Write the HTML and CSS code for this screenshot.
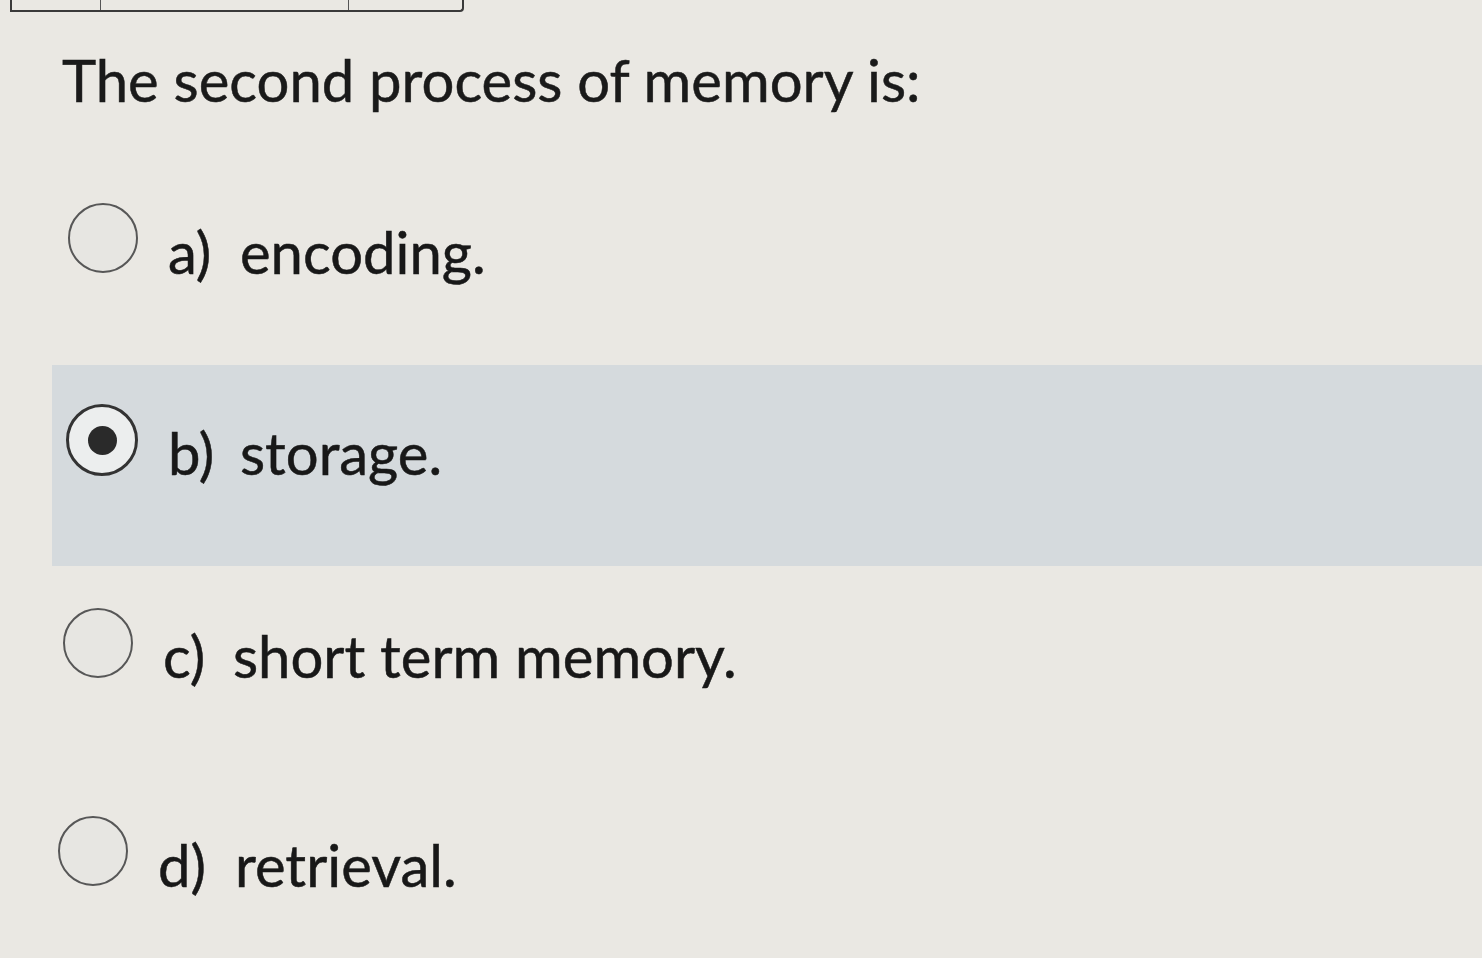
FILE: index.html
```html
<!DOCTYPE html>
<html lang="en">
<head>
<meta charset="utf-8">
<title>Quiz question</title>
<link rel="stylesheet" href="styles.css">
</head>
<body>
<div class="topbox">
  <div class="cell c1"></div>
  <div class="cell c2"></div>
  <div class="cell c3"></div>
</div>
<h1 class="question">The second process of memory is:</h1>
<div class="options">
  <label class="option opt-a">
    <span class="radio"></span>
    <span class="label"><span class="letter">a)</span><span class="text">encoding.</span></span>
  </label>
  <label class="option opt-b selected">
    <span class="radio"><span class="dot"></span></span>
    <span class="label"><span class="letter">b)</span><span class="text">storage.</span></span>
  </label>
  <label class="option opt-c">
    <span class="radio"></span>
    <span class="label"><span class="letter">c)</span><span class="text">short term memory.</span></span>
  </label>
  <label class="option opt-d">
    <span class="radio"></span>
    <span class="label"><span class="letter">d)</span><span class="text">retrieval.</span></span>
  </label>
</div>
</body>
</html>
```
FILE: styles.css
```css
html, body {
  margin: 0;
  padding: 0;
}
body {
  background: #eae8e3;
  font-family: Lato, "Open Sans", sans-serif;
  color: #181818;
  width: 1482px;
  height: 958px;
  overflow: hidden;
}
.topbox {
  display: flex;
  margin-left: 10px;
  width: 450px;
  height: 10px;
  border: 2px solid #3a3a3a;
  border-top: none;
  border-bottom-right-radius: 4px;
}
.cell {
  height: 100%;
}
.c1 { width: 88px; border-right: 1px solid #555; }
.c2 { width: 247px; border-right: 1px solid #555; }
.c3 { flex: 1; }
.question {
  margin: 32px 0 0 62px;
  font-size: 58px;
  line-height: 72px;
  font-weight: 400;
  color: #1a1a1a;
  -webkit-text-stroke: 0.5px #1a1a1a;
}
.options {
  margin-top: 48px;
  padding-left: 52px;
  display: flex;
  flex-direction: column;
}
.option {
  display: flex;
  align-items: flex-start;
  box-sizing: border-box;
  height: 201px;
  padding-top: 39px;
  padding-left: 16px;
}
.opt-b { padding-left: 14px; }
.opt-c { height: 206px; padding-top: 42px; padding-left: 11px; }
.opt-d { height: 206px; padding-top: 44px; padding-left: 6px; }
.option.selected {
  background: #d5dadd;
}
.radio {
  width: 66px;
  height: 66px;
  border: 2.5px solid #575757;
  border-radius: 50%;
  flex: none;
  display: flex;
  align-items: center;
  justify-content: center;
  background: #e7e6e2;
}
.selected .radio {
  border: 3px solid #333;
  background: #eceeee;
}
.dot {
  width: 29px;
  height: 29px;
  border-radius: 50%;
  background: #2a2a2a;
}
.label {
  display: flex;
  margin-top: 13px;
  margin-left: 30px;
  font-size: 58px;
  line-height: 72px;
  -webkit-text-stroke: 0.5px #181818;
}
.opt-c .label { margin-top: 12px; }
.letter {
  width: 72px;
  flex: none;
}
.opt-c .letter { width: 70px; }
.opt-d .letter { width: 77px; }
```
